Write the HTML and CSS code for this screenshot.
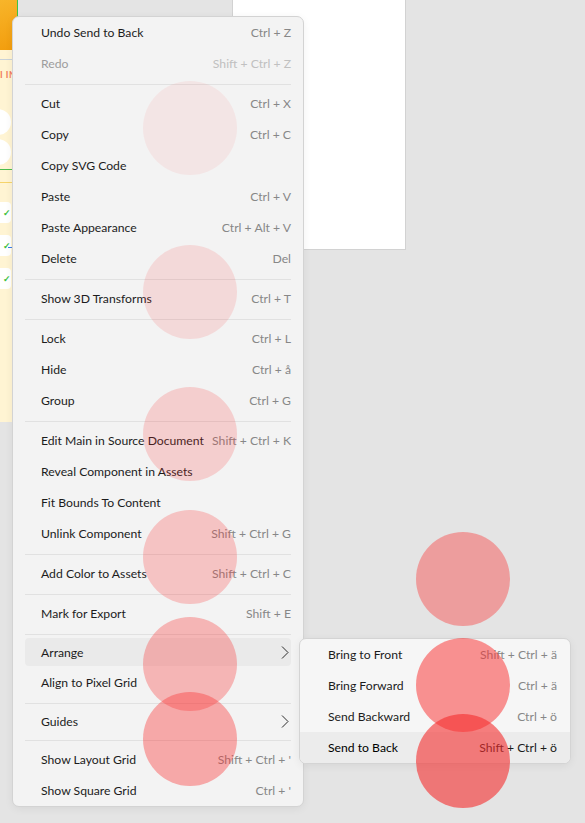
FILE: index.html
```html
<!DOCTYPE html>
<html lang="en">
<head>
    <meta charset="UTF-8">
    <meta name="viewport" content="width=device-width, initial-scale=1.0">
    <title>Context menu</title>
    <link rel="stylesheet" href="styles.css">
</head>
<body>

    <!-- canvas behind the menu -->
    <div class="art">
        <div class="art-top"></div>
        <div class="art-edge"></div>
        <div class="art-rule"></div>
        <div class="art-label">I IN</div>
        <div class="art-knob knob-1"></div>
        <div class="art-knob knob-2"></div>
        <div class="art-line green"></div>
        <div class="art-line yellow"></div>
        <div class="art-pill pill-1">&#10003;</div>
        <div class="art-pill pill-2">&#10003;<span class="dash"></span></div>
        <div class="art-pill pill-3">&#10003;</div>
    </div>
    <div class="artboard"></div>

    <!-- context menu -->
    <div class="menu">
        <div class="item"><span>Undo Send to Back</span><span class="key">Ctrl + Z</span></div>
        <div class="item disabled"><span>Redo</span><span class="key">Shift + Ctrl + Z</span></div>
        <div class="sep"></div>
        <div class="item"><span>Cut</span><span class="key">Ctrl + X</span></div>
        <div class="item"><span>Copy</span><span class="key">Ctrl + C</span></div>
        <div class="item"><span>Copy SVG Code</span></div>
        <div class="item"><span>Paste</span><span class="key">Ctrl + V</span></div>
        <div class="item"><span>Paste Appearance</span><span class="key">Ctrl + Alt + V</span></div>
        <div class="item"><span>Delete</span><span class="key">Del</span></div>
        <div class="sep"></div>
        <div class="item"><span>Show 3D Transforms</span><span class="key">Ctrl + T</span></div>
        <div class="sep"></div>
        <div class="item"><span>Lock</span><span class="key">Ctrl + L</span></div>
        <div class="item"><span>Hide</span><span class="key">Ctrl + å</span></div>
        <div class="item"><span>Group</span><span class="key">Ctrl + G</span></div>
        <div class="sep"></div>
        <div class="item"><span>Edit Main in Source Document</span><span class="key">Shift + Ctrl + K</span></div>
        <div class="item"><span>Reveal Component in Assets</span></div>
        <div class="item"><span>Fit Bounds To Content</span></div>
        <div class="item"><span>Unlink Component</span><span class="key">Shift + Ctrl + G</span></div>
        <div class="sep"></div>
        <div class="item"><span>Add Color to Assets</span><span class="key">Shift + Ctrl + C</span></div>
        <div class="sep"></div>
        <div class="item"><span>Mark for Export</span><span class="key">Shift + E</span></div>
        <div class="sep"></div>
        <div class="item sub active"><span>Arrange</span>
            <svg class="chevron" width="8" height="13" viewBox="0 0 8 13"><polyline points="1,0.5 7,6.5 1,12.5" fill="none" stroke="#2b2b2b" stroke-width="1"/></svg>
        </div>
        <div class="item"><span>Align to Pixel Grid</span></div>
        <div class="sep"></div>
        <div class="item sub"><span>Guides</span>
            <svg class="chevron" width="8" height="13" viewBox="0 0 8 13"><polyline points="1,0.5 7,6.5 1,12.5" fill="none" stroke="#2b2b2b" stroke-width="1"/></svg>
        </div>
        <div class="sep"></div>
        <div class="item"><span>Show Layout Grid</span><span class="key">Shift + Ctrl + '</span></div>
        <div class="item"><span>Show Square Grid</span><span class="key">Ctrl + '</span></div>
    </div>

    <!-- Arrange submenu -->
    <div class="submenu">
        <div class="item"><span>Bring to Front</span><span class="key">Shift + Ctrl + ä</span></div>
        <div class="item"><span>Bring Forward</span><span class="key">Ctrl + ä</span></div>
        <div class="item"><span>Send Backward</span><span class="key">Ctrl + ö</span></div>
        <div class="item active"><span>Send to Back</span><span class="key">Shift + Ctrl + ö</span></div>
    </div>

    <!-- click trail from the screen recording -->
    <div class="dot dot-1"></div>
    <div class="dot dot-2"></div>
    <div class="dot dot-3"></div>
    <div class="dot dot-4"></div>
    <div class="dot dot-5"></div>
    <div class="dot dot-6"></div>
    <div class="dot dot-7"></div>
    <div class="dot dot-8"></div>
    <div class="dot dot-9"></div>

</body>
</html>
```

FILE: styles.css
```css
body {
    margin: 0;
    width: 585px;
    height: 823px;
    overflow: hidden;
    position: relative;
    background-color: #e4e4e4;
    font-family: Lato, "Noto Sans", sans-serif;
    font-size: 12.2px;
}

/* canvas */
.art {
    position: absolute;
    left: 0;
    top: 0;
    width: 18px;
    height: 422px;
    background-color: #fff4d3;
    overflow: hidden;
}
.art > div {
    position: absolute;
}
.art-top {
    left: 0;
    top: 0;
    width: 18px;
    height: 50px;
    background: linear-gradient(160deg, #f8b52a, #f29c0c);
    border-bottom-right-radius: 6px;
}
.art-edge {
    left: 17px;
    top: 0;
    width: 1px;
    height: 20px;
    background-color: #3fc24a;
}
.art-rule {
    left: 0;
    top: 59px;
    width: 18px;
    height: 1px;
    background-color: #c9d2d8;
}
.art-label {
    left: 0;
    top: 69px;
    font-size: 9px;
    font-weight: bold;
    letter-spacing: 0.5px;
    color: #f27d5c;
    white-space: nowrap;
}
.art-knob {
    left: -15px;
    width: 26px;
    height: 26px;
    border-radius: 50%;
    background-color: #fff;
}
.knob-1 { top: 109px; }
.knob-2 { top: 139px; }
.art-line {
    left: 0;
    width: 18px;
    height: 1px;
}
.art-line.green { top: 169px; background-color: #4cbd4c; }
.art-line.yellow { top: 182px; background-color: #f6d46b; }
.art-pill {
    left: -12px;
    width: 23px;
    height: 21px;
    border-radius: 4px;
    background-color: #fff;
    color: #3cbf3c;
    font-size: 9px;
    font-weight: bold;
    line-height: 21px;
    text-align: right;
}
.pill-1 { top: 202px; }
.pill-2 { top: 235px; }
.pill-3 { top: 268px; }
.dash {
    position: absolute;
    left: 20px;
    top: 12px;
    width: 4px;
    height: 1px;
    background-color: #3b7de8;
}

.artboard {
    position: absolute;
    left: 232px;
    top: -1px;
    width: 172px;
    height: 249px;
    background-color: #fff;
    border: 1px solid #d2d2d2;
}

/* menus */
.menu {
    position: absolute;
    left: 12px;
    top: 16px;
    width: 292px;
    box-sizing: border-box;
    padding: 0 12px;
    background-color: #f3f3f3;
    border: 1px solid #d3d3d3;
    border-radius: 7px;
    box-shadow: 0 2px 8px rgba(0, 0, 0, 0.06);
}
.item {
    display: flex;
    justify-content: space-between;
    align-items: center;
    height: 31px;
    padding-left: 16px;
    color: #1c1c1c;
    white-space: nowrap;
}
.key {
    color: #878787;
}
.item.disabled {
    color: #9d9d9d;
}
.item.disabled .key {
    color: #c0c0c0;
}
.sep {
    height: 1px;
    margin: 5px 0 3px;
    background-color: #e1e1e1;
}
.item.sub {
    height: 28px;
    margin: 2px 0 1px;
    padding-right: 2px;
    border-radius: 4px;
}
.item.active {
    background-color: #eaeaea;
}

.submenu {
    position: absolute;
    left: 299px;
    top: 638px;
    width: 272px;
    box-sizing: border-box;
    background-color: #f6f6f6;
    border: 1px solid #d4d4d4;
    border-radius: 7px;
    overflow: hidden;
    box-shadow: 0 2px 8px rgba(0, 0, 0, 0.06);
}
.submenu .item {
    padding: 0 13px 0 28px;
}
.submenu .item.active {
    background-color: #ececec;
    color: #000;
}
.submenu .item.active .key {
    color: #1a1a1a;
}

/* click trail */
.dot {
    position: absolute;
    width: 94px;
    height: 94px;
    margin: -47px 0 0 -47px;
    border-radius: 50%;
    pointer-events: none;
}
.dot-1 { left: 190px; top: 128px; background-color: rgba(250, 50, 50, 0.07); }
.dot-2 { left: 190px; top: 292px; background-color: rgba(250, 50, 50, 0.13); }
.dot-3 { left: 190px; top: 434px; background-color: rgba(250, 50, 50, 0.19); }
.dot-4 { left: 190px; top: 557px; background-color: rgba(250, 50, 50, 0.25); }
.dot-5 { left: 190px; top: 664px; background-color: rgba(250, 50, 50, 0.32); }
.dot-6 { left: 190px; top: 739px; background-color: rgba(250, 50, 50, 0.39); }
.dot-7 { left: 463px; top: 579px; background-color: rgba(250, 60, 60, 0.42); }
.dot-8 { left: 463px; top: 685px; background-color: rgba(250, 50, 50, 0.52); }
.dot-9 { left: 463px; top: 761px; background-color: rgba(245, 45, 45, 0.6); }
```
